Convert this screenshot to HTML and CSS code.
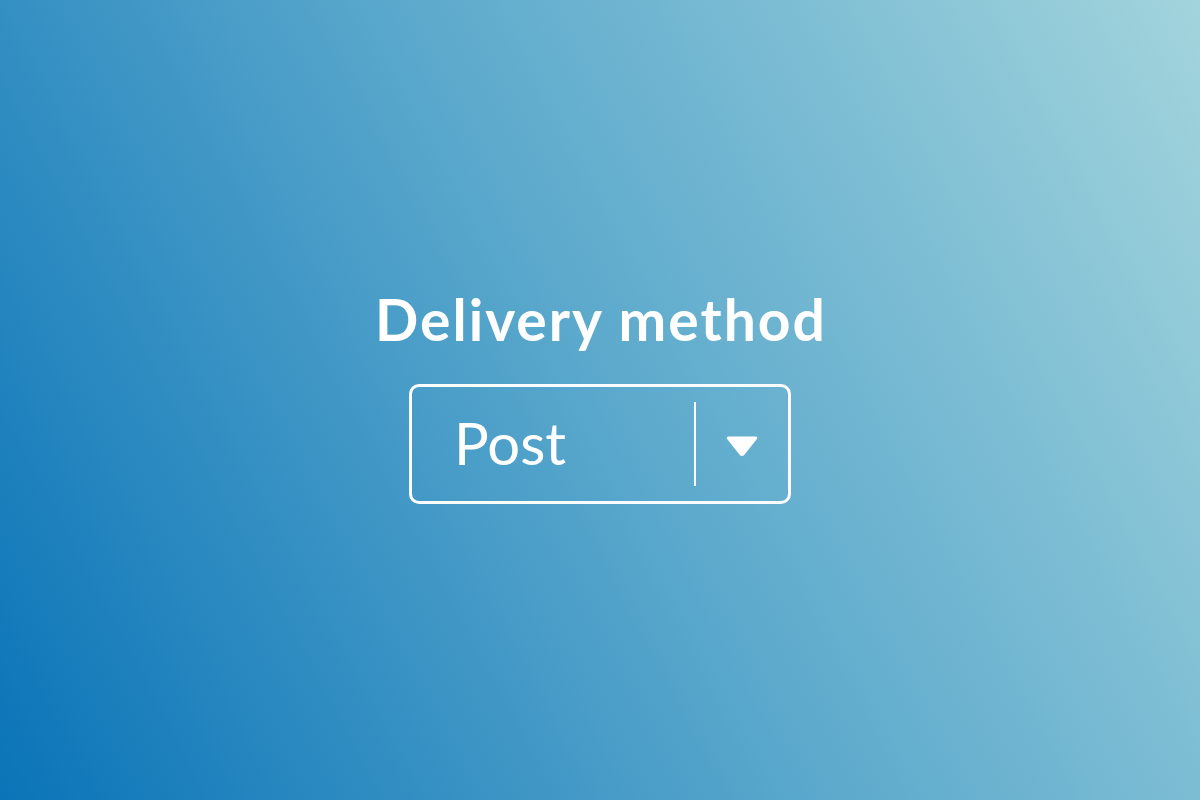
FILE: index.html
```html
<!DOCTYPE html>
<html lang="en">
<head>
<meta charset="utf-8">
<title>Delivery method</title>
<link rel="stylesheet" href="styles.css">
</head>
<body>
<main class="stage">
  <label class="title" for="method">Delivery method</label>
  <div class="select">
    <span class="value">Post</span>
    <span class="divider"></span>
    <span class="arrow">
      <svg width="32" height="21" viewBox="0 0 32 21"><path d="M3 0.5 H29 Q32.5 0.5 30.5 3.5 L18.2 19 Q16 21 13.8 19 L1.5 3.5 Q-0.5 0.5 3 0.5 Z" fill="#fff"/></svg>
    </span>
  </div>
</main>
</body>
</html>
```
FILE: styles.css
```css
html, body {
  margin: 0;
  padding: 0;
  width: 100%;
  height: 100%;
}
body {
  background: linear-gradient(62deg, #0a74b8 0%, #5aa8cc 50%, #a2d4dc 100%);
  font-family: Lato, "Noto Sans", sans-serif;
  color: #fff;
}
.stage {
  height: 800px;
  display: flex;
  flex-direction: column;
  align-items: center;
  padding-top: 284px;
  box-sizing: border-box;
}
.title {
  font-size: 57px;
  font-weight: 700;
  line-height: 70px;
  letter-spacing: 2px;
  margin-right: -2px;
}
.select {
  margin-top: 30px;
  width: 382px;
  height: 120px;
  box-sizing: border-box;
  border: 3.5px solid #fff;
  border-radius: 10px;
  display: flex;
  align-items: center;
}
.value {
  flex: 1;
  padding-left: 42px;
  padding-bottom: 3px;
  font-size: 58px;
  font-weight: 400;
}
.divider {
  width: 2px;
  height: 84px;
  background: #fff;
}
.arrow {
  width: 92px;
  display: flex;
  justify-content: center;
  align-items: center;
  padding-top: 4px;
}
.arrow svg { display: block; }
```
